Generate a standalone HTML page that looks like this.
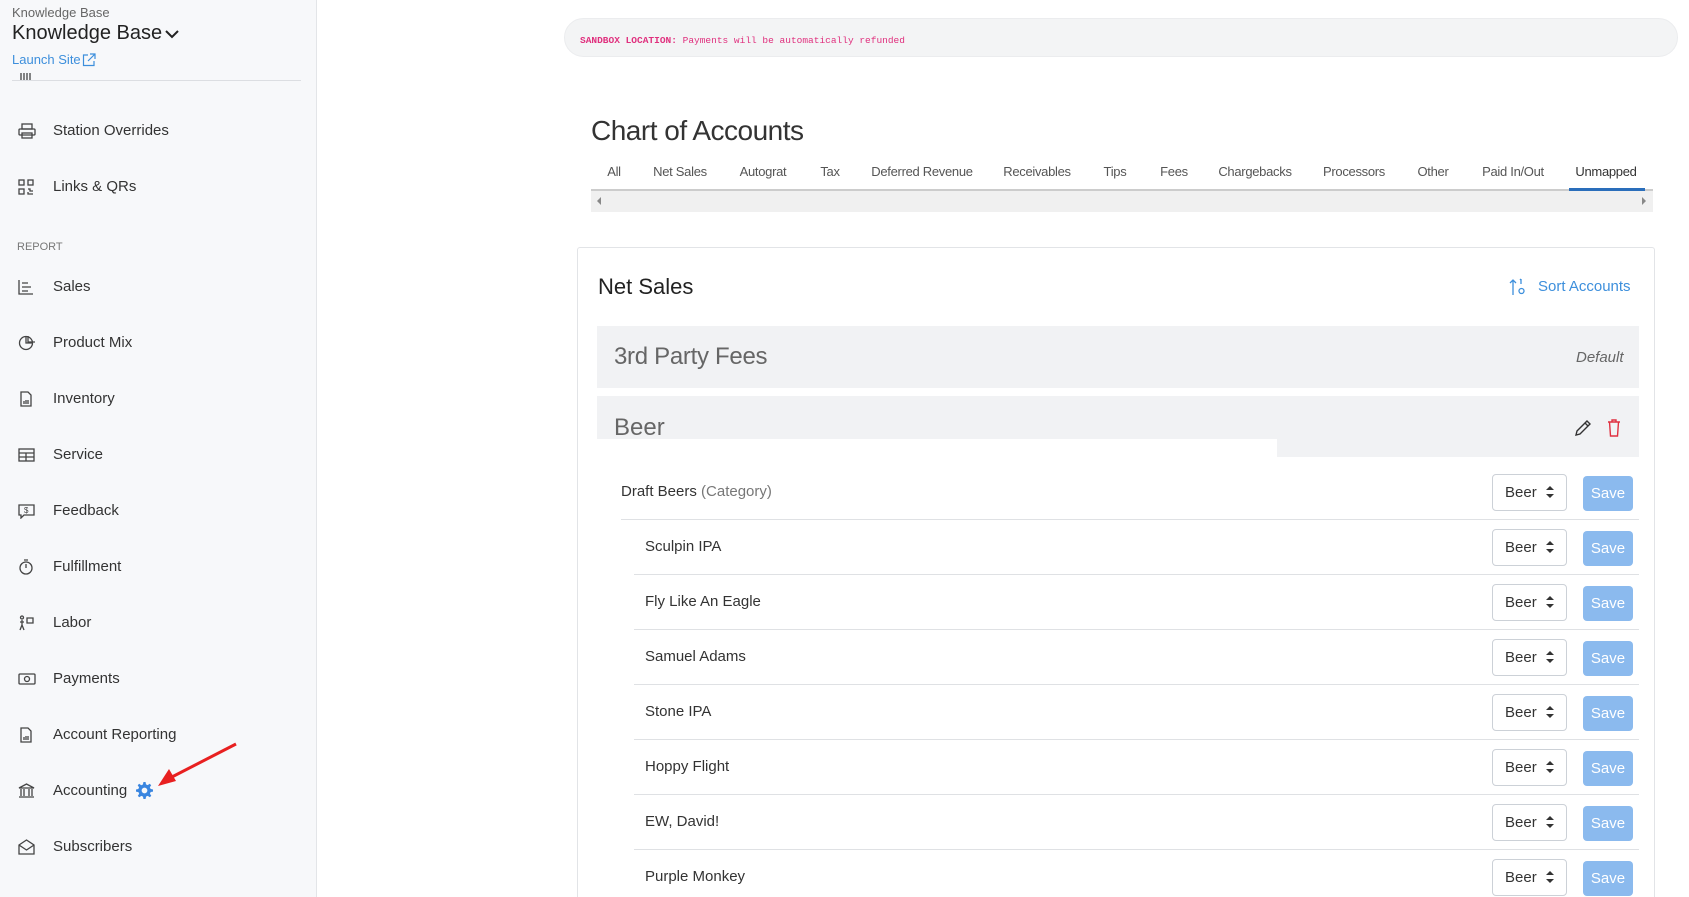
<!DOCTYPE html>
<html><head><meta charset="utf-8"><style>
*{box-sizing:border-box;margin:0;padding:0}
html{width:1689px;height:897px;overflow:hidden}
body{width:1689px;height:897px;overflow:hidden;background:#fff;font-family:"Liberation Sans",sans-serif;position:relative;color:#333}
.abs{position:absolute;white-space:nowrap}
#side{position:absolute;left:0;top:0;width:317px;height:897px;background:#f7f8fa;border-right:1px solid #e3e5e8;overflow:hidden}
.item{position:absolute;left:0;width:300px;height:24px;line-height:24px;font-size:15px;color:#333;white-space:nowrap}
.item .t{position:absolute;left:53px;top:0}
.item svg{position:absolute;left:18px;top:4px}
.n{font-family:"Liberation Sans Narrow","Liberation Sans",sans-serif}
.tab{position:absolute;top:164px;font-size:13px;color:#555;transform:translateX(-50%);white-space:nowrap;letter-spacing:-0.3px}
.row{position:absolute;height:24px;line-height:24px;font-size:15px;color:#333;white-space:nowrap}
.sel{position:absolute;left:1492px;width:75px;height:37px;border:1px solid #ccd1d7;border-radius:4px;background:#fff;font-size:15px;color:#333;line-height:35px;padding-left:12px}
.sel:after{content:"";position:absolute;right:12px;top:11px;border:4px solid transparent;border-bottom:4px solid #333;border-top:0}
.sel:before{content:"";position:absolute;right:12px;top:19px;border:4px solid transparent;border-top:4px solid #333;border-bottom:0}
.save{position:absolute;left:1583px;width:50px;height:35px;background:#8bbaee;border-radius:4px;color:#fff;font-size:15px;line-height:35px;text-align:center}
.sep{position:absolute;height:1px;background:#dfe1e4}
</style></head><body>
<div id="side">
<div class="abs" style="left:12px;top:5px;font-size:13px;color:#666" >Knowledge Base</div>
<div class="abs" style="left:12px;top:22px;font-size:20px;color:#222">Knowledge Base</div>
<svg class="abs" style="left:164px;top:28px" width="16" height="12" viewBox="0 0 16 12"><path d="M2 3l6 6 6-6" fill="none" stroke="#222" stroke-width="2"/></svg>
<div class="abs" style="left:12px;top:52px;font-size:13px;color:#3d8fdc">Launch Site</div>
<svg class="abs" style="left:82px;top:53px" width="14" height="14" viewBox="0 0 14 14"><path d="M6 2H1.5v10.5H12V8M8 1h5v5M13 1L6 8" fill="none" stroke="#3d8fdc" stroke-width="1.2"/></svg>
<div class="item" style="top:73px;height:7px;overflow:hidden;background:#f7f8fa"><svg style="top:-4px" width="16" height="16" viewBox="0 0 16 16" fill="none" stroke="#444" stroke-width="1.3"><path d="M3 2v14M6 2v14M9 2v14M12 2v14"/></svg><span class="t" style="top:-17px">Processors</span></div>
<div class="abs" style="left:12px;top:80px;width:289px;height:1px;background:#dcdee2"></div>
<div class="item" style="top:119px"><svg width="18" height="16" viewBox="0 0 18 16" fill="none" stroke="#444" stroke-width="1.3"><rect x="4" y="1" width="10" height="5"/><rect x="1" y="6" width="16" height="6" rx="1"/><rect x="4" y="10" width="10" height="5"/></svg><span class="t">Station Overrides</span></div>
<div class="item" style="top:175px"><svg width="16" height="16" viewBox="0 0 16 16" fill="none" stroke="#444" stroke-width="1.3"><rect x="1" y="1" width="5" height="5"/><rect x="10" y="1" width="5" height="5"/><rect x="1" y="10" width="5" height="5"/><path d="M10 10h2v2h3M10 13v2h5"/></svg><span class="t">Links &amp; QRs</span></div>
<div class="abs" style="left:17px;top:241px;font-size:11px;color:#777">REPORT</div>
<div class="item" style="top:275px"><svg width="16" height="16" viewBox="0 0 16 16" fill="none" stroke="#444" stroke-width="1.3"><path d="M1 1v14h14M4 4h6M4 8h9M4 12h6"/></svg><span class="t">Sales</span></div>
<div class="item" style="top:331px"><svg width="18" height="16" viewBox="0 0 18 16" fill="none" stroke="#444" stroke-width="1.3"><circle cx="8" cy="8" r="6.5"/><path d="M8 1.5V8h6.5M10 1v6h7"/></svg><span class="t">Product Mix</span></div>
<div class="item" style="top:387px"><svg width="16" height="16" viewBox="0 0 16 16" fill="none" stroke="#444" stroke-width="1.3"><path d="M3 1h7l3 3v11H3z M6 13v-3M8 13V9M10 13v-4"/></svg><span class="t">Inventory</span></div>
<div class="item" style="top:443px"><svg width="17" height="16" viewBox="0 0 17 16" fill="none" stroke="#444" stroke-width="1.3"><rect x="1" y="2" width="15" height="12"/><path d="M1 6h15M1 10h15M8 6v8"/></svg><span class="t">Service</span></div>
<div class="item" style="top:499px"><svg width="17" height="16" viewBox="0 0 17 16" fill="none" stroke="#444" stroke-width="1.3"><path d="M1 2h15v10H6l-3 3v-3H1z"/><text x="6" y="10" font-size="8" fill="#444" stroke="none">$</text></svg><span class="t">Feedback</span></div>
<div class="item" style="top:555px"><svg width="16" height="16" viewBox="0 0 16 16" fill="none" stroke="#444" stroke-width="1.3"><circle cx="8" cy="9" r="6"/><path d="M6 1h4M8 9V5"/></svg><span class="t">Fulfillment</span></div>
<div class="item" style="top:611px"><svg width="16" height="16" viewBox="0 0 16 16" fill="none" stroke="#444" stroke-width="1.3"><circle cx="4" cy="2.5" r="1.5"/><path d="M4 5v5l-2 5M4 10l2 5M2 7h4M9 3h6v5H9z"/></svg><span class="t">Labor</span></div>
<div class="item" style="top:667px"><svg width="18" height="16" viewBox="0 0 18 16" fill="none" stroke="#444" stroke-width="1.3"><rect x="1" y="3" width="16" height="10" rx="1"/><circle cx="9" cy="8" r="2.5"/></svg><span class="t">Payments</span></div>
<div class="item" style="top:723px"><svg width="16" height="16" viewBox="0 0 16 16" fill="none" stroke="#444" stroke-width="1.3"><path d="M3 1h7l3 3v11H3z M6 13v-3M8 13V9M10 13v-4"/></svg><span class="t">Account Reporting</span></div>
<div class="item" style="top:779px"><svg width="17" height="16" viewBox="0 0 17 16" fill="none" stroke="#444" stroke-width="1.3"><path d="M1 5l7.5-4L16 5zM3 6v7M6 6v7M11 6v7M14 6v7M1 14h15"/></svg><span class="t">Accounting</span>
<svg style="left:136px;top:3px" width="17" height="17" viewBox="0 0 16 16"><path fill="#3a86e0" d="M7 0h2l.4 2.2 1.6.7 1.9-1.3 1.4 1.4-1.3 1.9.7 1.6L16 7v2l-2.2.4-.7 1.6 1.3 1.9-1.4 1.4-1.9-1.3-1.6.7L9 16H7l-.4-2.2-1.6-.7-1.9 1.3-1.4-1.4 1.3-1.9-.7-1.6L0 9V7l2.2-.4.7-1.6L1.6 3.1 3 1.7l1.9 1.3 1.6-.7zM8 5.3A2.7 2.7 0 1 0 8 10.7 2.7 2.7 0 0 0 8 5.3z"/></svg></div>
<div class="item" style="top:835px"><svg width="17" height="16" viewBox="0 0 17 16" fill="none" stroke="#444" stroke-width="1.3"><path d="M1 6l7.5-5L16 6v9H1zM1 6l7.5 5L16 6"/></svg><span class="t">Subscribers</span></div>
<svg class="abs" style="left:150px;top:740px" width="90" height="50" viewBox="0 0 90 50"><path d="M86 4L18 39" stroke="#e82020" stroke-width="3"/><path d="M8 46l11-17 7 12z" fill="#e82020"/></svg>
</div>

<div class="abs" style="left:564px;top:18px;width:1114px;height:39px;background:#f3f4f5;border-radius:20px;border:1px solid #ebecee"></div>
<div class="abs" style="left:580px;top:35px;font-family:'Liberation Mono',monospace;font-size:9.5px;color:#e0307e"><b>SANDBOX LOCATION:</b> Payments will be automatically refunded</div>

<div class="abs n" style="left:591px;top:115px;font-size:28px;color:#333;letter-spacing:-0.5px">Chart of Accounts</div>
<div class="tab n" style="left:614px">All</div>
<div class="tab n" style="left:680px">Net Sales</div>
<div class="tab n" style="left:763px">Autograt</div>
<div class="tab n" style="left:830px">Tax</div>
<div class="tab n" style="left:922px">Deferred Revenue</div>
<div class="tab n" style="left:1037px">Receivables</div>
<div class="tab n" style="left:1115px">Tips</div>
<div class="tab n" style="left:1174px">Fees</div>
<div class="tab n" style="left:1255px">Chargebacks</div>
<div class="tab n" style="left:1354px">Processors</div>
<div class="tab n" style="left:1433px">Other</div>
<div class="tab n" style="left:1513px">Paid In/Out</div>
<div class="tab n" style="left:1606px;color:#333">Unmapped</div>
<div class="abs" style="left:591px;top:189px;width:1062px;height:2px;background:#ccc"></div>
<div class="abs" style="left:1569px;top:188px;width:76px;height:3px;background:#2a6ebb"></div>
<div class="abs" style="left:591px;top:191px;width:1062px;height:21px;background:#f0f0f0"></div>
<div class="abs" style="left:597px;top:197px;border:4px solid transparent;border-right:4px solid #888;border-left:0"></div>
<div class="abs" style="left:1642px;top:197px;border:4px solid transparent;border-left:4px solid #888;border-right:0"></div>

<div class="abs" style="left:577px;top:247px;width:1078px;height:660px;border:1px solid #e2e4e7;border-radius:3px"></div>
<div class="abs n" style="left:598px;top:274px;font-size:22px;color:#222">Net Sales</div>
<svg class="abs" style="left:1509px;top:278px" width="18" height="18" viewBox="0 0 18 18" fill="none" stroke="#3d8fdc" stroke-width="1.3"><path d="M4 17V2M1 5l3-3 3 3"/><path d="M12 1v5M11 2l1-1"/><circle cx="12.5" cy="13" r="2.5"/></svg>
<div class="abs" style="left:1538px;top:278px;font-size:15px;color:#3d8fdc">Sort Accounts</div>

<div class="abs" style="left:597px;top:326px;width:1042px;height:62px;background:#f1f2f4"></div>
<div class="abs n" style="left:614px;top:343px;font-size:24px;color:#666;letter-spacing:-0.3px">3rd Party Fees</div>
<div class="abs" style="left:1576px;top:349px;font-size:15px;font-style:italic;color:#666">Default</div>
<div class="abs" style="left:597px;top:396px;width:1042px;height:61px;background:#f1f2f4"></div>
<div class="abs n" style="left:614px;top:414px;font-size:24px;color:#666">Beer</div>
<svg class="abs" style="left:1574px;top:419px" width="18" height="18" viewBox="0 0 18 18" fill="none" stroke="#333" stroke-width="1.4"><path d="M2 16l1-4L13 2l3 3L6 15zM11 4l3 3"/></svg>
<svg class="abs" style="left:1607px;top:419px" width="14" height="18" viewBox="0 0 14 18" fill="none" stroke="#e03040" stroke-width="1.4"><path d="M1 3h12M5 3V1h4v2M2.5 3l1 14h7l1-14"/></svg>
<div class="abs" style="left:578px;top:439px;width:699px;height:19px;background:#fff"></div>

<div class="row n" style="left:621px;top:480px">Draft Beers <span style="color:#777">(Category)</span></div>
<div class="sep" style="left:621px;top:519px;width:1018px"></div>
<div class="row n" style="left:645px;top:535px">Sculpin IPA</div>
<div class="sep" style="left:634px;top:574px;width:1005px"></div>
<div class="row n" style="left:645px;top:590px">Fly Like An Eagle</div>
<div class="sep" style="left:634px;top:629px;width:1005px"></div>
<div class="row n" style="left:645px;top:645px">Samuel Adams</div>
<div class="sep" style="left:634px;top:684px;width:1005px"></div>
<div class="row n" style="left:645px;top:700px">Stone IPA</div>
<div class="sep" style="left:634px;top:739px;width:1005px"></div>
<div class="row n" style="left:645px;top:755px">Hoppy Flight</div>
<div class="sep" style="left:634px;top:794px;width:1005px"></div>
<div class="row n" style="left:645px;top:810px">EW, David!</div>
<div class="sep" style="left:634px;top:849px;width:1005px"></div>
<div class="row n" style="left:645px;top:865px">Purple Monkey</div>

<div class="sel" style="top:474px">Beer</div><div class="save" style="top:476px">Save</div>
<div class="sel" style="top:529px">Beer</div><div class="save" style="top:531px">Save</div>
<div class="sel" style="top:584px">Beer</div><div class="save" style="top:586px">Save</div>
<div class="sel" style="top:639px">Beer</div><div class="save" style="top:641px">Save</div>
<div class="sel" style="top:694px">Beer</div><div class="save" style="top:696px">Save</div>
<div class="sel" style="top:749px">Beer</div><div class="save" style="top:751px">Save</div>
<div class="sel" style="top:804px">Beer</div><div class="save" style="top:806px">Save</div>
<div class="sel" style="top:859px">Beer</div><div class="save" style="top:861px">Save</div>
</body></html>
